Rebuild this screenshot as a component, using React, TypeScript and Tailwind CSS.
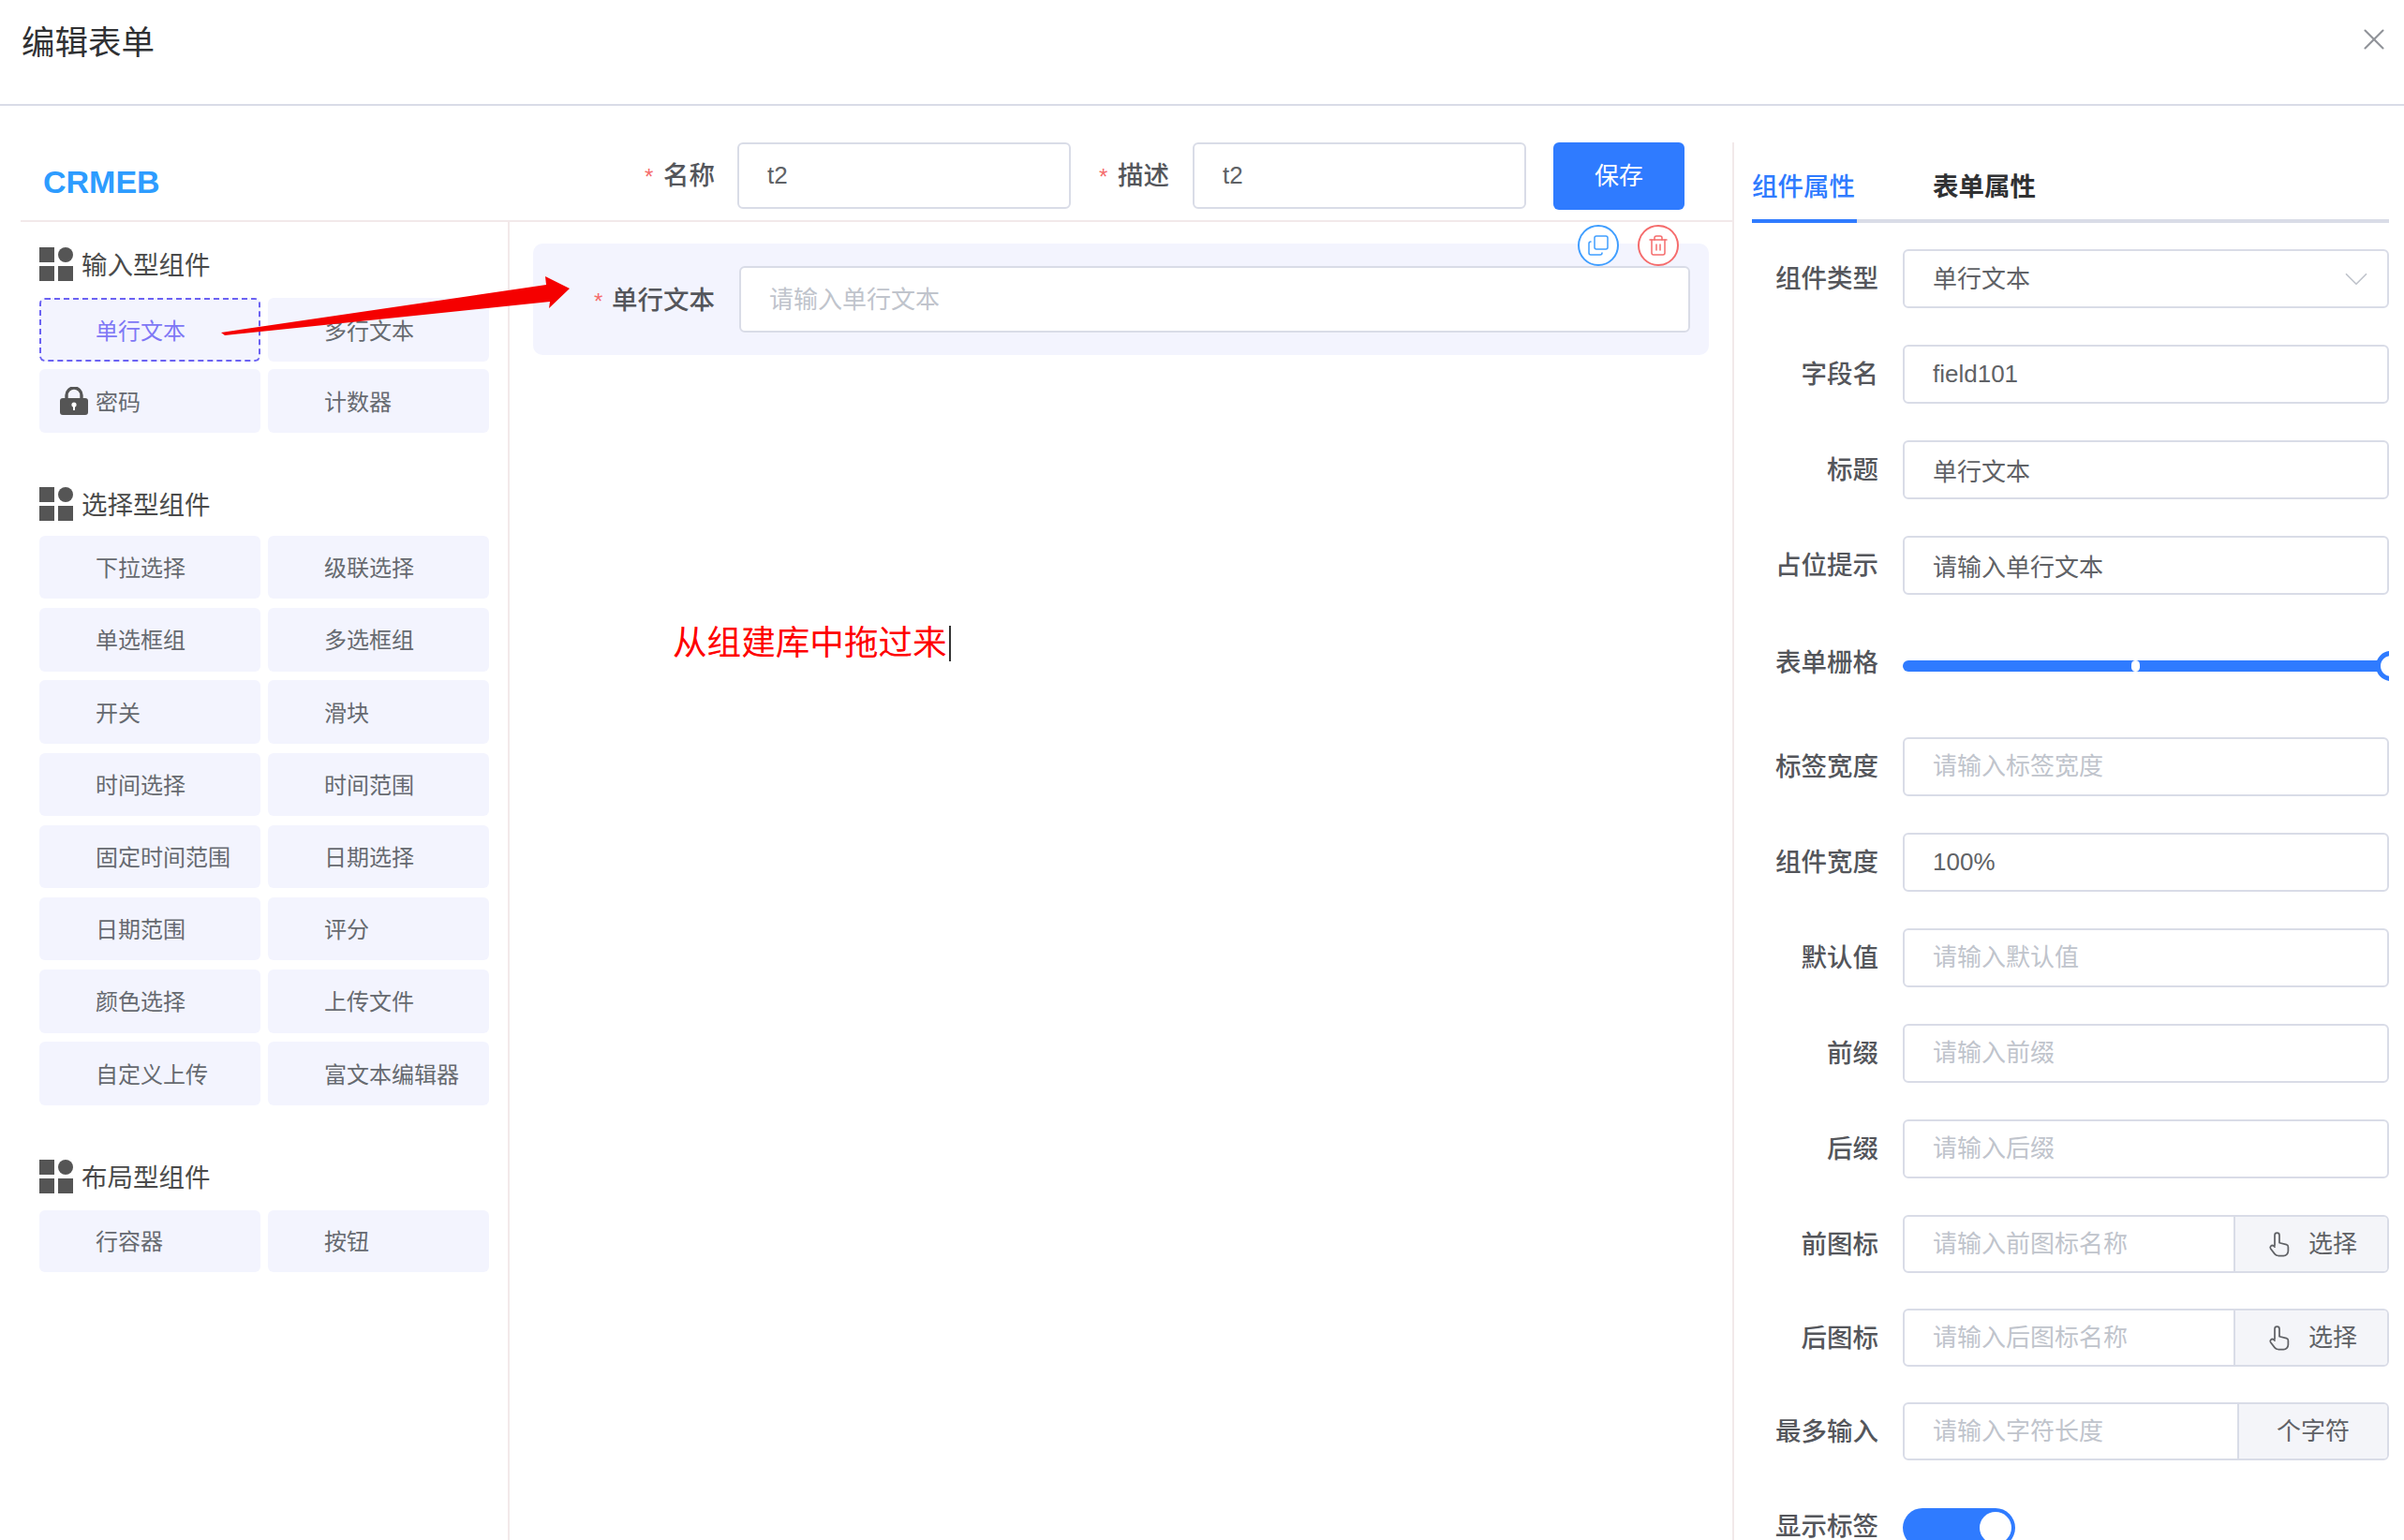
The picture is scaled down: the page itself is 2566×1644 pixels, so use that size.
import React from 'react';
import { ChevronDown, Copy, Trash2, X } from 'lucide-react';

const inputCls =
  'w-full h-full min-w-0 bg-transparent outline-none px-[30px] text-[26px] text-[#606266] placeholder:text-[#c0c4cc]';

const GridIcon = () => (
  <svg width="36" height="36" viewBox="0 0 36 36" className="shrink-0" fill="#555555">
    <rect x="0" y="0" width="16" height="16" />
    <circle cx="28" cy="8" r="8" />
    <rect x="0" y="20" width="16" height="16" />
    <rect x="20" y="20" width="16" height="16" />
  </svg>
);

const LockIcon = () => (
  <svg width="30" height="30" viewBox="0 0 30 30" className="shrink-0 -mt-[3px]">
    <path d="M7 13V9a8 8 0 0 1 16 0v4" fill="none" stroke="#555555" strokeWidth="3.4" />
    <rect x="0" y="12" width="30" height="18" rx="3" fill="#555555" />
    <circle cx="15" cy="19" r="2.6" fill="#ffffff" />
    <rect x="14" y="20" width="2" height="5" fill="#ffffff" />
  </svg>
);

const HandIcon = () => (
  <svg width="30" height="30" viewBox="0 0 24 24" fill="none" stroke="#606266" strokeWidth="1.4" strokeLinecap="round" strokeLinejoin="round">
    <path d="M8 13V4.5a2 2 0 0 1 4 0V11l6 1.5a2 2 0 0 1 1.5 2V18a4 4 0 0 1-4 4H11a4 4 0 0 1-3-1.5L4.5 16a1.8 1.8 0 0 1 2.6-2.4L8 14.5" />
  </svg>
);

const Section: React.FC<{ title: string; items: string[]; gap: string; active?: string; lock?: string; itemH: string; mt?: string; className?: string }> = ({
  title,
  items,
  gap,
  active,
  lock,
  itemH,
  mt = 'mt-[18px]',
  className,
}) => (
  <div className={className}>
    <div className="flex items-center gap-[9px] h-[36px] text-[27.5px] text-[#4a4a4a]">
      <GridIcon />
      <span className="pt-[4px]">{title}</span>
    </div>
    <div className={`grid grid-cols-[236px_236px] gap-x-[8px] ${mt} ${gap}`}>
      {items.map((item) => (
        <div
          key={item}
          className={`flex items-center rounded-[6px] text-[24px] pt-[3px] ${itemH} ${
            item === active
              ? 'bg-[#f3f4fe] border-2 border-dashed border-[#6b62f2] text-[#7f78f5] pl-[58px]'
              : item === lock
                ? 'bg-[#f3f4fe] text-[#666a70] pl-[22px] gap-[8px]'
                : 'bg-[#f3f4fe] text-[#666a70] pl-[60px]'
          }`}
        >
          {item === lock && <LockIcon />}
          {item}
        </div>
      ))}
    </div>
  </div>
);

const Row: React.FC<{ label: string; h?: string; mb?: string; labelCls?: string; children: React.ReactNode }> = ({
  label,
  h = 'h-[63px]',
  mb = 'mb-[39px]',
  labelCls = 'pt-[1px]',
  children,
}) => (
  <div className={`flex items-center gap-[26px] ${h} ${mb}`}>
    <label className={`w-[135px] shrink-0 text-right text-[27.5px] font-medium text-[#54565b] ${labelCls}`}>{label}</label>
    <div className="w-[519px] h-full">{children}</div>
  </div>
);

const Input: React.FC<{ value?: string; placeholder?: string }> = ({ value, placeholder }) => (
  <div className="h-full rounded-[6px] border-2 border-[#d9dce7]">
    <input className={inputCls} readOnly value={value} placeholder={placeholder} />
  </div>
);

const AddonInput: React.FC<{ placeholder: string; addon: React.ReactNode; w: string }> = ({ placeholder, addon, w }) => (
  <div className="h-full flex rounded-[6px] border-2 border-[#d9dce7] overflow-hidden">
    <input className={inputCls} readOnly placeholder={placeholder} />
    <div className={`${w} shrink-0 flex items-center justify-center gap-[16px] bg-[#f4f5f9] border-l-2 border-[#d9dce7] text-[26px] text-[#606266]`}>
      {addon}
    </div>
  </div>
);

const SelectAddon = () => (
  <>
    <HandIcon />
    <span>选择</span>
  </>
);

export default function App() {
  return (
    <div className="w-[2566px] h-[1644px] overflow-hidden bg-white font-['Liberation_Sans','Noto_Sans_CJK_SC',sans-serif]">
      {/* Header */}
      <div className="h-[113px] border-b-2 border-[#d9dce7] pl-[23px] pr-[13px] pt-[24px] flex justify-between items-start">
        <h1 className="text-[35.5px] leading-[44px] text-[#303133]">编辑表单</h1>
        <X size={38} strokeWidth={1.3} className="text-[#909399] -mt-[1px]" />
      </div>

      <div className="flex">
        <div className="ml-[22px] w-[1827px] shrink-0">
          {/* Top bar */}
          <div className="h-[124px] border-b-2 border-[#f2e9ea] pt-[39px] flex items-start">
            <div className="w-[666px] pl-[24px] pt-[22px] text-[34px] leading-[40px] font-bold text-[#2d9cff]">CRMEB</div>
            <div className="flex items-center h-[71px] shrink-0 text-[27.5px] font-medium text-[#54565b]">
              <span className="text-[#f56c6c] w-[20px] pt-[2px] text-[24px]">*</span>
              <span className="w-[79px]">名称</span>
              <div className="w-[356px] h-full shrink-0 rounded-[6px] border-2 border-[#d9dce7]">
                <input className={`${inputCls} font-normal`} readOnly value="t2" />
              </div>
            </div>
            <div className="flex items-center h-[71px] ml-[30px] shrink-0 text-[27.5px] font-medium text-[#54565b]">
              <span className="text-[#f56c6c] w-[20px] pt-[2px] text-[24px]">*</span>
              <span className="w-[80px]">描述</span>
              <div className="w-[356px] h-full shrink-0 rounded-[6px] border-2 border-[#d9dce7]">
                <input className={`${inputCls} font-normal`} readOnly value="t2" />
              </div>
            </div>
            <button className="ml-[29px] w-[140px] h-[72px] rounded-[6px] bg-[#2f7bff] text-white text-[26px]">保存</button>
          </div>

          <div className="flex h-[1407px]">
            {/* Component library */}
            <div className="w-[522px] shrink-0 border-r-2 border-[#f2e9ea] pl-[20px] pt-[27px]">
              <Section
                title="输入型组件"
                items={['单行文本', '多行文本', '密码', '计数器']}
                gap="gap-y-[8px]"
                itemH="h-[68px]"
                active="单行文本"
                lock="密码"
              />
              <Section
                className="mt-[58px]"
                title="选择型组件"
                items={[
                  '下拉选择',
                  '级联选择',
                  '单选框组',
                  '多选框组',
                  '开关',
                  '滑块',
                  '时间选择',
                  '时间范围',
                  '固定时间范围',
                  '日期选择',
                  '日期范围',
                  '评分',
                  '颜色选择',
                  '上传文件',
                  '自定义上传',
                  '富文本编辑器',
                ]}
                mt="mt-[16px]"
                gap="gap-y-[9.8px]"
                itemH="h-[67.4px]"
              />
              <Section className="mt-[58px]" title="布局型组件" items={['行容器', '按钮']} gap="gap-y-[8px]" itemH="h-[66px]" />
            </div>

            {/* Canvas */}
            <div className="flex-1 relative pl-[25px] pr-[25px] pt-[23px]">
              <div className="relative h-[119px] rounded-[10px] bg-[#f3f4fe] flex items-center pl-[65px] pr-[20px] text-[27.5px] font-medium text-[#54565b]">
                <span className="text-[#f56c6c] w-[19px] pt-[4px] text-[24px]">*</span>
                <span className="w-[136px] pt-[2px]">单行文本</span>
                <div className="flex-1 h-[71px] rounded-[6px] border-2 border-[#d9dce7] bg-white">
                  <input className={`${inputCls} font-normal pt-[2px]`} readOnly placeholder="请输入单行文本" />
                </div>
                <div className="absolute -top-[20px] right-[32px] flex gap-[20px]">
                  <div className="w-[44px] h-[44px] rounded-full border-2 border-[#409eff] bg-white flex items-center justify-center text-[#409eff]">
                    <Copy size={24} strokeWidth={1.5} className="-scale-y-100" />
                  </div>
                  <div className="w-[44px] h-[44px] rounded-full border-2 border-[#f56c6c] bg-white flex items-center justify-center text-[#f56c6c]">
                    <Trash2 size={24} strokeWidth={1.5} />
                  </div>
                </div>
              </div>

              {/* Annotation over the canvas */}
              <div className="absolute left-[174px] top-[428px] flex items-center text-[36.6px] leading-[44px] text-[#ff0000]">
                从组建库中拖过来
                <span className="ml-[2px] w-[2px] h-[38px] bg-[#333333]" />
              </div>
            </div>
          </div>
        </div>

        {/* Properties panel */}
        <div className="mt-[39px] flex-1 border-l-2 border-[#f2e9ea] pl-[19px]">
          <div className="w-[680px] h-[86px] border-b-4 border-[#d9dce7] flex gap-[81px] text-[27.5px]">
            <div className="h-[86px] pt-[27px] w-[112px] border-b-4 border-[#2f7bff] font-medium text-[#2f7bff]">组件属性</div>
            <div className="h-[86px] pt-[27px] font-bold text-[#303133]">表单属性</div>
          </div>

          <div className="mt-[28px]">
            <Row label="组件类型">
              <div className="h-full rounded-[6px] border-2 border-[#d9dce7] flex items-center justify-between pl-[30px] pr-[12px] text-[26px] text-[#606266]">
                <span className="pt-[2px]">单行文本</span>
                <ChevronDown size={42} strokeWidth={1} className="text-[#c0c4cc]" />
              </div>
            </Row>
            <Row label="字段名"><Input value="field101" /></Row>
            <Row label="标题"><Input value="单行文本" /></Row>
            <Row label="占位提示"><Input value="请输入单行文本" /></Row>
            <Row label="表单栅格" h="h-[74px]" mb="mb-[39px]" labelCls="pb-[7px]">
              <div className="relative h-full overflow-hidden flex items-center">
                <div className="w-full h-[12px] rounded-full bg-[#2f7bff]" />
                <div className="absolute left-[244px] top-[31px] w-[9px] h-[12px] rounded-full bg-white" />
                <div className="absolute -right-[18px] top-[21px] w-[32px] h-[32px] rounded-full border-[5px] border-[#2f7bff] bg-white" />
              </div>
            </Row>
            <Row label="标签宽度"><Input placeholder="请输入标签宽度" /></Row>
            <Row label="组件宽度"><Input value="100%" /></Row>
            <Row label="默认值"><Input placeholder="请输入默认值" /></Row>
            <Row label="前缀"><Input placeholder="请输入前缀" /></Row>
            <Row label="后缀"><Input placeholder="请输入后缀" /></Row>
            <Row label="前图标" h="h-[62px]" mb="mb-[38px]">
              <AddonInput placeholder="请输入前图标名称" w="w-[164px]" addon={<SelectAddon />} />
            </Row>
            <Row label="后图标" h="h-[62px]" mb="mb-[38px]">
              <AddonInput placeholder="请输入后图标名称" w="w-[164px]" addon={<SelectAddon />} />
            </Row>
            <Row label="最多输入" h="h-[62px]" mb="mb-[51px]">
              <AddonInput placeholder="请输入字符长度" w="w-[160px]" addon="个字符" />
            </Row>
            <div className="flex items-start gap-[26px]">
              <label className="w-[135px] shrink-0 text-right text-[27.5px] leading-[40px] font-medium text-[#54565b]">显示标签</label>
              <div className="w-[120px] h-[42px] rounded-full bg-[#2f7bff] relative">
                <div className="absolute right-[4px] top-[4px] w-[34px] h-[34px] rounded-full bg-white" />
              </div>
            </div>
          </div>
        </div>
      </div>

      {/* Hand-drawn arrow lying over the panels */}
      <svg className="absolute left-0 top-0 pointer-events-none" width="2566" height="1644">
        <polygon points="236,355 583,304 582,295 608,308 586,329 587,322 240,358" fill="#f50000" />
      </svg>
    </div>
  );
}
